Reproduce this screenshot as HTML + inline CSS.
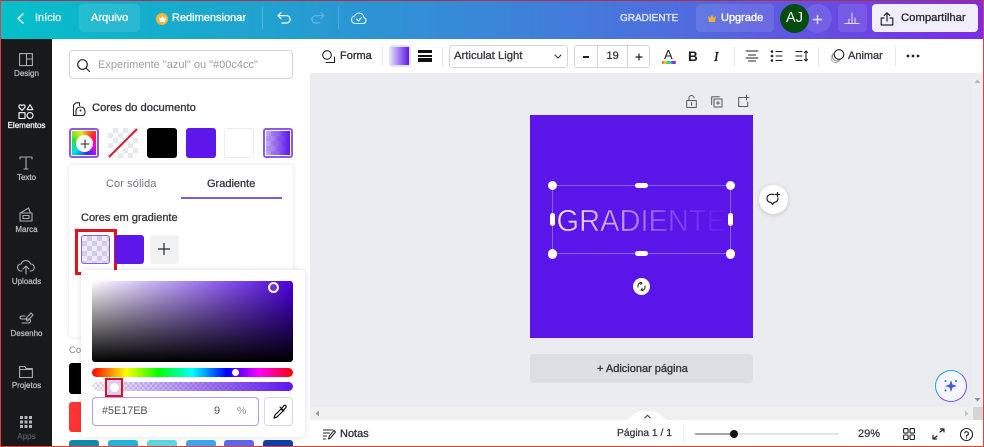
<!DOCTYPE html>
<html><head><meta charset="utf-8"><style>
*{box-sizing:border-box}
html,body{margin:0;padding:0}
body{width:984px;height:447px;position:relative;overflow:hidden;background:#ebecf0;font-family:"Liberation Sans",sans-serif;color:#26282c}
#r{position:absolute;left:0;top:0;width:984px;height:447px;overflow:hidden;filter:blur(.3px)}
.a{position:absolute}
.t{position:absolute;white-space:nowrap;line-height:1}
.m{-webkit-text-stroke:.35px currentColor}
svg{position:absolute;overflow:visible}
.w{color:#fff;font-size:11px;-webkit-text-stroke:.35px #fff}
.nav{position:absolute;left:1px;width:51px;text-align:center;color:#b5b7ba;font-size:8px;line-height:1;-webkit-text-stroke:.3px currentColor}
.sw{position:absolute;width:30px;height:30px;border-radius:3px}
.chk{background-color:#fff;background-image:conic-gradient(#e6e8ea 25%,transparent 0 50%,#e6e8ea 0 75%,transparent 0);background-size:10px 10px}
.ln{fill:none;stroke:currentColor;stroke-width:1.4;stroke-linecap:round;stroke-linejoin:round}
.h{position:absolute;background:#fff;border-radius:50%;width:9.500px;height:9.500px}
.p{position:absolute;background:#fff;border-radius:3px}
</style></head><body><div id="r">

<!-- top bar -->
<div class="a" style="left:0;top:0;width:984px;height:39px;background:linear-gradient(90deg,#03c0c9 0%,#1fa3cf 25%,#3a86d8 50%,#5368de 72%,#7d2ae8 100%)"></div>
<div class="a" style="left:79px;top:4px;width:61px;height:28px;background:rgba(255,255,255,.1);border-radius:4px"></div>
<svg style="left:17px;top:13px;color:#fff" width="7" height="11"><path class="ln" style="stroke-width:1.500" d="M6 1 1 5.500 6 10"/></svg>
<div class="t w" style="left:35px;top:13px;color:#e4f7f8;-webkit-text-stroke-color:#e4f7f8">Início</div>
<div class="t w" style="left:91px;top:13px">Arquivo</div>
<div class="a" style="left:156px;top:13px;width:12px;height:12px;border-radius:50%;background:#f4b73c"></div>
<svg style="left:158.500px;top:15.500px" width="7" height="6"><path d="M0 1l1.700 1.700L3.500 0l1.800 2.700L7 1 6 6H1z" fill="#fff"/></svg>
<div class="t w" style="left:172px;top:13px;font-size:11px">Redimensionar</div>
<div class="a" style="left:262px;top:7px;width:1px;height:22px;background:rgba(255,255,255,.18)"></div>
<svg style="left:277px;top:12px;color:#fff" width="14" height="12"><path class="ln" style="stroke-width:1.200" d="M4 .7 1 3.700l3 3M1.500 3.700H9.500a3.500 3.500 0 0 1 0 7.300H5"/></svg>
<svg style="left:311px;top:12px;color:#6cb0e4" width="14" height="12"><path class="ln" style="stroke-width:1.200" d="M10 .7l3 3-3 3M12.500 3.700H4.500a3.500 3.500 0 0 0 0 7.300H9"/></svg>
<div class="a" style="left:338px;top:7px;width:1px;height:22px;background:rgba(255,255,255,.18)"></div>
<svg style="left:351px;top:12px;color:#e8f2fb" width="16" height="12"><path class="ln" style="stroke-width:1.100" d="M4 11.500h8a3 3 0 0 0 1-5.800A5 5 0 0 0 3.500 4 3.800 3.800 0 0 0 4 11.500zM5.500 7l2 2 3-3.500"/></svg>

<div class="t w" style="left:620px;top:14px;color:#e3e6fb;-webkit-text-stroke-color:#e3e6fb;font-size:10px">GRADIENTE</div>
<div class="a" style="left:696px;top:4px;width:78px;height:28px;background:rgba(255,255,255,.1);border-radius:4px"></div>
<svg style="left:708px;top:15px" width="8" height="7"><path d="M0 1l2 1.700L4 0l2 2.700L8 1 7 7H1z" fill="#f3b13c"/></svg>
<div class="t w" style="left:721px;top:13px">Upgrade</div>
<div class="a" style="left:803px;top:4px;width:29px;height:29px;border-radius:50%;background:rgba(255,255,255,.1)"></div>
<div class="a" style="left:780px;top:4px;width:29px;height:29px;border-radius:50%;background:#044d0e;text-align:center;color:#fff;font-size:14.500px;line-height:29px">AJ</div>
<svg style="left:813px;top:15px;color:#e6e3fa" width="9" height="9"><path class="ln" d="M4.500 .5v8M.5 4.500h8"/></svg>
<div class="a" style="left:838px;top:4px;width:29px;height:28px;background:rgba(255,255,255,.1);border-radius:4px"></div>
<svg style="left:845px;top:12px;color:#e5e3fa" width="14" height="12"><path class="ln" style="stroke-width:1" d="M0 11.500h14M4 11V7M7 11V1M10 11V6"/></svg>
<div class="a" style="left:872px;top:4px;width:106px;height:28px;background:#f1eefb;border-radius:4px"></div>
<svg style="left:880px;top:11.500px;color:#26282c" width="14" height="14"><path class="ln" style="stroke-width:1.200" d="M7 9V1M4.200 3.500 7 .8l2.800 2.700M4 6H1.200v7h11.600V6H10"/></svg>
<div class="t m" style="left:901px;top:13px;font-size:11.300px;color:#2b2d33">Compartilhar</div>

<!-- sidebar -->
<div class="a" style="left:0;top:39px;width:52px;height:408px;background:#18191b"></div>
<svg style="left:19px;top:52.500px;color:#a9abae" width="14" height="13"><path class="ln" style="stroke-width:1.100" d="M.6.6h12.800v12H.6zM7.500.6v12M7.500 6H13.400"/></svg>
<div class="nav" style="top:70px">Design</div>
<svg style="left:18px;top:104px;color:#fff" width="16" height="15"><path class="ln" style="stroke-width:1.100" d="M4 6.300 1 3.300q-.5-2.500 1.500-2.500 1 0 1.500 1 .5-1 1.500-1 2 0 1.500 2.500zM12 .7 15 5.700H9zM1 8.700h6v5.800H1z"/><circle class="ln" style="stroke-width:1.100" cx="12" cy="11.500" r="3"/></svg>
<div class="nav" style="top:122px;color:#f3f3f4">Elementos</div>
<svg style="left:19px;top:156px;color:#a9abae" width="14" height="14"><path class="ln" style="stroke-width:1.100" d="M1 3V1h12v2M7 1v12M5 13h4"/></svg>
<div class="nav" style="top:174px">Texto</div>
<svg style="left:19px;top:207px;color:#a9abae" width="14" height="15"><path class="ln" style="stroke-width:1.100" d="M1 6h12v8H1zM1.500 6l8-5 2 5M4 8.500h6v3H4z"/></svg>
<div class="nav" style="top:226px">Marca</div>
<svg style="left:17px;top:259px;color:#a9abae" width="18" height="16"><path class="ln" style="stroke-width:1.100" d="M5 12H4a3.500 3.500 0 0 1 0-7 5 5 0 0 1 9.500 0 3.500 3.500 0 0 1 .5 7h-1M9 15V7M6 10l3-3 3 3"/></svg>
<div class="nav" style="top:278px">Uploads</div>
<svg style="left:19px;top:312px;color:#a9abae" width="15" height="14"><path class="ln" style="stroke-width:1.100" d="M6.500 7 12 1l2 2-5.500 6zM6 4H3Q1 4 1 5.500T3 7h6q2.500 0 2.500 2T9 11H3"/></svg>
<div class="nav" style="top:330px">Desenho</div>
<svg style="left:19px;top:365px;color:#a9abae" width="14" height="13"><path class="ln" style="stroke-width:1.100" d="M.6 1.500h5l1.500 2h6.300v9H.6zM.6 4.500h12.800"/></svg>
<div class="nav" style="top:382px">Projetos</div>
<svg style="left:20px;top:416px" width="12" height="12" fill="#b5b7ba"><rect width="3" height="3"/><rect x="4.500" width="3" height="3"/><rect x="9" width="3" height="3"/><rect y="4.500" width="3" height="3"/><rect x="4.500" y="4.500" width="3" height="3"/><rect x="9" y="4.500" width="3" height="3"/><rect y="9" width="3" height="3"/><rect x="4.500" y="9" width="3" height="3"/><rect x="9" y="9" width="3" height="3"/></svg>
<div class="nav" style="top:433px;color:#55575a">Apps</div>

<!-- panel -->
<div class="a" style="left:52px;top:39px;width:258px;height:408px;background:#fff"></div>
<div class="a" style="left:69px;top:50px;width:224px;height:29px;border:1px solid #d3d5d9;border-radius:4px"></div>
<svg style="left:77px;top:59px;color:#26282c" width="14" height="13"><circle class="ln" style="stroke-width:1.200" cx="5.500" cy="5.500" r="4.800"/><path class="ln" style="stroke-width:1.200" d="M9 9 12.500 12.500"/></svg>
<div class="t" style="left:98px;top:60px;font-size:11px;color:#9a9da3">Experimente "azul" ou "#00c4cc"</div>
<svg style="left:72px;top:102px;color:#26282c" width="14" height="14"><path class="ln" style="stroke-width:1.100" d="M1.500 13.500V3L4 .8h3.500V3.500M1.500 13.500h9q2.500 0 2.500-3.500 0-5-4.500-5Q4 5 4 9.500v4"/><circle cx="8.500" cy="8.500" r="1" fill="#26282c"/></svg>
<div class="t m" style="left:92px;top:103px;font-size:11.200px;color:#36383d">Cores do documento</div>

<div class="sw" style="left:69px;top:128px;border:2px solid #8b5be8;padding:1px;background:#fff"><div style="width:100%;height:100%;background:conic-gradient(from 45deg,#ff2a2a,#ff00d0,#2a32ff,#00e0e0,#27e827,#f4e81e,#ff2a2a)"></div></div>
<div class="a" style="left:76px;top:135px;width:17px;height:17px;border-radius:50%;background:#fff"></div>
<svg style="left:80.500px;top:139.500px;color:#222" width="8" height="8"><path class="ln" style="stroke-width:1" d="M4 0v8M0 4h8"/></svg>
<div class="sw chk" style="left:108px;top:128px"></div>
<svg style="left:108px;top:128px" width="30" height="30"><path d="M1 29 29 1" stroke="#c9203f" stroke-width="2"/></svg>
<div class="sw" style="left:147px;top:128px;background:#000"></div>
<div class="sw" style="left:186px;top:128px;background:#5e17eb"></div>
<div class="sw" style="left:224px;top:128px;background:#fff;border:1px solid #ecedef"></div>
<div class="sw" style="left:263px;top:128px;border:2px solid #8b5be8;padding:1px;background:#fff"><div style="width:100%;height:100%;background-color:#fff;background-image:linear-gradient(90deg,rgba(94,23,235,.35),#5e17eb),conic-gradient(#e6e8ea 25%,transparent 0 50%,#e6e8ea 0 75%,transparent 0);background-size:auto,10px 10px"></div></div>

<!-- tab card -->
<div class="a" style="left:69px;top:165px;width:224px;height:172px;background:#fff;border-radius:4px;box-shadow:0 0 5px rgba(40,40,60,.13)"></div>
<div class="t" style="left:106px;top:179px;font-size:11px;color:#74777c;letter-spacing:.1px">Cor sólida</div>
<div class="t m" style="left:207px;top:179px;font-size:11px;color:#3a3c41">Gradiente</div>
<div class="a" style="left:181px;top:197px;width:101px;height:2px;background:#7d5ae0"></div>
<div class="t m" style="left:81px;top:213px;font-size:11px;color:#3a3c41">Cores em gradiente</div>
<div class="a" style="left:75px;top:229px;width:42px;height:46px;border:3px solid #e0141e"></div>
<div class="sw" style="left:81px;top:235px;width:29px;height:29px;border:1.500px solid #8b5be8;background-color:#fff;background-image:linear-gradient(rgba(94,23,235,.09),rgba(94,23,235,.09)),conic-gradient(#dcdde7 25%,transparent 0 50%,#dcdde7 0 75%,transparent 0);background-size:auto,10px 10px"></div>
<div class="sw" style="left:115px;top:235px;width:29px;height:29px;background:#5e17eb"></div>
<div class="sw" style="left:150px;top:235px;width:29px;height:29px;background:#f1f2f4"></div>
<svg style="left:158px;top:243px;color:#26282c" width="12" height="12"><path class="ln" style="stroke-width:1.200" d="M6 .5v11M.5 6h11"/></svg>

<!-- bottom swatches behind popup -->
<div class="t" style="left:69px;top:346px;font-size:9.500px;color:#85888d">Co</div>
<div class="a" style="left:69px;top:363px;width:30px;height:31px;background:#000;border-radius:3px"></div>
<div class="a" style="left:69px;top:402px;width:30px;height:30px;background:#ff3434;border-radius:3px"></div>
<div class="a" style="left:69px;top:440px;width:30px;height:7px;background:#0f8aa8;border-radius:3px 3px 0 0"></div>
<div class="a" style="left:108px;top:440px;width:30px;height:7px;background:#1eb6d8;border-radius:3px 3px 0 0"></div>
<div class="a" style="left:147px;top:440px;width:30px;height:7px;background:#5cd6de;border-radius:3px 3px 0 0"></div>
<div class="a" style="left:186px;top:440px;width:30px;height:7px;background:#3ea6ee;border-radius:3px 3px 0 0"></div>
<div class="a" style="left:224px;top:440px;width:30px;height:7px;background:#5a6ae8;border-radius:3px 3px 0 0"></div>
<div class="a" style="left:263px;top:440px;width:30px;height:7px;background:#0f3fa6;border-radius:3px 3px 0 0"></div>

<!-- popup -->
<div class="a" style="left:81px;top:270px;width:224px;height:167px;background:#fff;border-radius:4px;box-shadow:0 0 6px rgba(40,40,60,.16)"></div>
<div class="a" style="left:92px;top:281px;width:201px;height:81px;border-radius:3px;background:linear-gradient(to bottom,transparent,#000),linear-gradient(to right,#fff,#4b00e0)"></div>
<div class="a" style="left:268px;top:282px;width:11px;height:11px;border-radius:50%;border:2px solid #fff;background:#6a35e8"></div>
<div class="a" style="left:92px;top:368px;width:201px;height:9px;border-radius:5px;background:linear-gradient(90deg,#f00 0%,#ff0 17%,#0f0 33%,#0ff 50%,#00f 67%,#f0f 83%,#f00 100%)"></div>
<div class="a" style="left:232px;top:369px;width:7px;height:7px;border-radius:50%;background:#fff"></div>
<div class="a" style="left:92px;top:382px;width:201px;height:9px;border-radius:5px;background-color:#fff;background-image:linear-gradient(90deg,rgba(94,23,235,0),#5e17eb),conic-gradient(#d8d9de 25%,transparent 0 50%,#d8d9de 0 75%,transparent 0);background-size:auto,5px 5px"></div>
<div class="a" style="left:105px;top:378px;width:18px;height:19px;background:#d9cdf6;border:2.500px solid #d8141f"></div>
<div class="a" style="left:109.500px;top:383px;width:9px;height:9px;border-radius:50%;background:#fff"></div>
<div class="a" style="left:92px;top:397px;width:167px;height:29px;border:1.500px solid #b79bee;border-radius:4px"></div>
<div class="t" style="left:102px;top:406px;font-size:10.800px;color:#54575c">#5E17EB</div>
<div class="t" style="left:214px;top:406px;font-size:11px;color:#54575c">9</div>
<div class="t" style="left:237px;top:406px;font-size:10.500px;color:#8d9095">%</div>
<div class="a" style="left:264px;top:397px;width:29px;height:29px;border:1px solid #d5d7db;border-radius:4px"></div>
<svg style="left:273px;top:404px;color:#111" width="14" height="15"><path class="ln" style="stroke-width:1.200" d="M1 14l1-3 6-6 2 2-6 6zM7 3l4 4M9 4l2-2.500q1-.7 1.800.2T13 3.500L10.500 6"/></svg>

<!-- toolbar -->
<div class="a" style="left:310px;top:39px;width:674px;height:34px;background:#fff"></div>
<svg style="left:322px;top:50px;color:#222" width="13" height="13"><circle class="ln" style="stroke-width:1.100" cx="5" cy="5" r="4.300"/><path class="ln" style="stroke-width:1.100" d="M4 12.500h8.500V7"/></svg>
<div class="t m" style="left:340px;top:51px;font-size:11px;color:#2e3035">Forma</div>
<div class="a" style="left:382px;top:46px;width:1px;height:19px;background:#e6e7ea"></div>
<div class="a" style="left:389px;top:45px;width:22px;height:22px;border-radius:3px;background:#e5e3f0"></div>
<div class="a" style="left:391px;top:47px;width:18px;height:18px;background:linear-gradient(90deg,#ded3fa,#5e17eb)"></div>
<div class="a" style="left:418px;top:50px;width:14px;height:3px;background:#111"></div>
<div class="a" style="left:418px;top:55px;width:14px;height:2px;background:#111"></div>
<div class="a" style="left:418px;top:58px;width:14px;height:4px;background:#111"></div>
<div class="a" style="left:442px;top:47px;width:1px;height:19px;background:#e6e7ea"></div>
<div class="a" style="left:449px;top:45px;width:119px;height:23px;border:1px solid #d3d5d9;border-radius:3px"></div>
<div class="t m" style="left:454px;top:51px;font-size:11.300px;color:#3c3e43">Articulat Light</div>
<svg style="left:554px;top:54px;color:#333" width="8" height="6"><path class="ln" style="stroke-width:1.100" d="M1 1l3 3 3-3"/></svg>
<div class="a" style="left:574px;top:45px;width:76px;height:23px;border:1px solid #d3d5d9;border-radius:3px"></div>
<div class="a" style="left:597px;top:45px;width:1px;height:23px;background:#d3d5d9"></div>
<div class="a" style="left:627px;top:45px;width:1px;height:23px;background:#d3d5d9"></div>
<div class="a" style="left:583px;top:56px;width:6px;height:1.500px;background:#222"></div>
<div class="t m" style="left:606.500px;top:51px;font-size:11px;color:#3c3e43">19</div>
<svg style="left:635px;top:52.500px;color:#222" width="8" height="8"><path class="ln" style="stroke-width:1.200" d="M4 1v6M1 4h6"/></svg>
<div class="t" style="left:664px;top:48px;font-size:13px;color:#222">A</div>
<div class="a" style="left:662px;top:61px;width:14px;height:3px;border-radius:1px;background:linear-gradient(90deg,#f33,#fc3,#3d3,#3cf,#53e,#c3e)"></div>
<div class="t" style="left:688px;top:50px;font-size:13.500px;font-weight:bold;color:#1a1a1a">B</div>
<div class="t m" style="left:714px;top:50px;font-size:13.500px;font-style:italic;font-family:'Liberation Serif',serif;color:#1a1a1a">I</div>
<div class="a" style="left:734px;top:47px;width:1px;height:19px;background:#e6e7ea"></div>
<svg style="left:745px;top:50px;color:#222" width="14" height="12"><path class="ln" style="stroke-width:1.100" d="M1 1h12M3.500 5h7M1 8h12M3.500 11h7"/></svg>
<svg style="left:770px;top:50px;color:#222" width="13" height="12"><path class="ln" style="stroke-width:1.100" d="M6 1.500h6M6 6h6M6 10.500h6"/><circle cx="2" cy="1.500" r="1.300" fill="#222"/><circle cx="2" cy="6" r="1.300" fill="#222"/><circle cx="2" cy="10.500" r="1.300" fill="#222"/></svg>
<svg style="left:795px;top:50px;color:#222" width="14" height="12"><path class="ln" style="stroke-width:1.100" d="M1 1.500h6M1 6h6M1 10.500h6M11 1v10M9.500 2.500 11 1l1.500 1.500M9.500 9.500 11 11l1.500-1.500"/></svg>
<div class="a" style="left:818px;top:47px;width:1px;height:19px;background:#e6e7ea"></div>
<svg style="left:830px;top:49px;color:#333" width="15" height="15"><circle cx="5.500" cy="9" r="4.500" fill="none" stroke="#aaa"/><circle cx="7" cy="7.500" r="4.500" fill="#fff" stroke="#888"/><circle cx="9" cy="5.500" r="4.800" fill="#fff" stroke="#222" stroke-width="1.100"/></svg>
<div class="t m" style="left:848px;top:51px;font-size:11px;color:#3c3e43">Animar</div>
<div class="a" style="left:895px;top:47px;width:1px;height:19px;background:#e6e7ea"></div>
<svg style="left:906px;top:54px" width="14" height="4" fill="#222"><circle cx="2" cy="2" r="1.400"/><circle cx="7" cy="2" r="1.400"/><circle cx="12" cy="2" r="1.400"/></svg>

<!-- page controls -->
<svg style="left:685.500px;top:94.500px;color:#55585c" width="11" height="13"><path class="ln" style="stroke-width:1" d="M.7 5.500h9.600v7H.7zM3 5.500V3a2.500 2.500 0 0 1 5 0M5.500 7.500v3"/></svg>
<svg style="left:711px;top:96px;color:#55585c" width="12" height="12"><path class="ln" style="stroke-width:1" d="M3 3h8v8H3zM.7 8.500V.7h7.500M7 5.500v3M5.500 7h3"/></svg>
<svg style="left:737.500px;top:95px;color:#55585c" width="11" height="12"><path class="ln" style="stroke-width:1" d="M5 2.500H.7V11.500H9.700V7M8.500 0v5M6 2.500h5"/></svg>

<!-- page -->
<div class="a" style="left:530px;top:115px;width:223px;height:223px;background:#5a15e8"></div>
<svg style="left:530px;top:160px" width="223" height="90"><defs><linearGradient id="g" gradientUnits="userSpaceOnUse" x1="26" y1="0" x2="196" y2="0"><stop offset="0" stop-color="#f4effe"/><stop offset=".35" stop-color="#c5a8f6"/><stop offset=".62" stop-color="#8e5cf2"/><stop offset=".88" stop-color="#6a2aec"/><stop offset="1" stop-color="#5e1bea"/></linearGradient></defs><text x="26.500" y="71" font-family="Liberation Sans" font-size="30.500" textLength="169.500" lengthAdjust="spacingAndGlyphs" fill="url(#g)" stroke="#5a15e8" stroke-width=".55">GRADIENTE</text></svg>
<div class="a" style="left:552px;top:184.500px;width:179px;height:69.500px;border:1px solid #8a60f0"></div>
<div class="h" style="left:547.500px;top:180.500px"></div>
<div class="h" style="left:725.500px;top:180.500px"></div>
<div class="h" style="left:547.500px;top:249px"></div>
<div class="h" style="left:725.500px;top:249px"></div>
<div class="p" style="left:635px;top:183px;width:13px;height:4.500px"></div>
<div class="p" style="left:635px;top:251px;width:13px;height:4.500px"></div>
<div class="p" style="left:550px;top:213px;width:4.500px;height:13px"></div>
<div class="p" style="left:728px;top:213px;width:4.500px;height:13px"></div>
<div class="a" style="left:633px;top:278px;width:17px;height:17px;border-radius:50%;background:#fff"></div>
<svg style="left:637px;top:282px;color:#222" width="9" height="9"><path class="ln" style="stroke-width:1" d="M1 5V3.500A2.500 2.500 0 0 1 3.500 1H5M3 .2 5 1 3.800 2.500M8 4v1.500A2.500 2.500 0 0 1 5.500 8H4M6 8.800 4 8l1.200-1.500"/></svg>
<div class="a" style="left:759px;top:185px;width:28.500px;height:28.500px;border-radius:50%;background:#fff;box-shadow:0 1px 4px rgba(0,0,0,.18)"></div>
<svg style="left:766px;top:192px;color:#222" width="15" height="15"><path class="ln" style="stroke-width:1.200" d="M8 2.500Q1 1.500 1 6.500 1 10 5 10.500L6.500 12.500 8 10.500Q12 10 12 6M11.500.5v4M9.500 2.500h4"/></svg>

<div class="a" style="left:530px;top:354px;width:223px;height:29px;background:#dddee3;border-radius:4px"></div>
<div class="t m" style="left:597px;top:364px;font-size:11px;color:#34363b">+ Adicionar página</div>

<!-- magic -->
<div class="a" style="left:935px;top:370px;width:32px;height:32px;border-radius:50%;background:#f5f6fb;border:1.500px solid;border-color:#27a5c8 #7d4ce0 #7d4ce0 #27a5c8"></div>
<svg style="left:943px;top:378px" width="16" height="16" fill="#3f5de0"><path d="M8 2l1.500 4.500L14 8 9.500 9.500 8 14 6.500 9.500 2 8l4.500-1.500z"/><circle cx="2.500" cy="3" r="1"/><circle cx="13" cy="3" r="1"/><circle cx="2.500" cy="12.500" r="1"/></svg>

<!-- scrollbars -->
<div class="a" style="left:972px;top:73px;width:12px;height:334px;background:#eceef1"></div>
<svg style="left:974px;top:79px" width="7" height="5"><path d="M.5 4 3.500.5 6.500 4z" fill="#b5b6b9"/></svg>
<svg style="left:974px;top:397px" width="7" height="5"><path d="M.5 1 3.500 4.500 6.500 1z" fill="#8b8c8f"/></svg>
<div class="a" style="left:310px;top:407px;width:674px;height:13px;background:#f0f0f1"></div>
<svg style="left:315px;top:410px" width="5" height="7"><path d="M4 .5.5 3.500 4 6.500z" fill="#9b9c9f"/></svg>
<svg style="left:964px;top:410px" width="5" height="7"><path d="M1 .5 4.500 3.500 1 6.500z" fill="#c2c3c5"/></svg>
<div class="a" style="left:973px;top:407px;width:10px;height:13px;background:#d4d5d7"></div>

<!-- bottom bar -->
<div class="a" style="left:310px;top:420px;width:674px;height:27px;background:#fff"></div>
<svg style="left:622px;top:410px" width="50" height="11"><path d="M0 11C9 11 11 1 20 1h10c9 0 11 10 20 10z" fill="#fff"/></svg>
<svg style="left:644px;top:414px;color:#444" width="7" height="5"><path class="ln" style="stroke-width:1.100" d="M.8 4 3.500 1.200 6.200 4"/></svg>
<svg style="left:323px;top:429px;color:#222" width="13" height="11"><path class="ln" style="stroke-width:1" d="M.5 1h9M.5 4h6M.5 7h3M.5 10h2M5.500 10l.8-3L11 1.500l1.500 1.500L7.500 9z"/></svg>
<div class="t m" style="left:340px;top:429px;font-size:11px;color:#34363b">Notas</div>
<div class="t m" style="left:617px;top:429px;font-size:10.300px;color:#34363b;-webkit-text-stroke-width:.25px">Página 1 / 1</div>
<div class="a" style="left:683px;top:423px;width:1px;height:20px;background:#eceded"></div>
<div class="a" style="left:695px;top:433px;width:144px;height:1.500px;background:#e3e4e6"></div>
<div class="a" style="left:695px;top:433px;width:38px;height:1.500px;background:#a5a6a9"></div>
<div class="a" style="left:730px;top:429.500px;width:8px;height:8px;border-radius:50%;background:#111"></div>
<div class="t m" style="left:858px;top:429px;font-size:11px;color:#34363b;-webkit-text-stroke-width:.25px">29%</div>
<svg style="left:903px;top:428px;color:#222" width="12" height="12"><rect class="ln" style="stroke-width:1.100" x=".6" y=".6" width="4.500" height="4.500" rx="1"/><rect class="ln" style="stroke-width:1.100" x="7" y=".6" width="4.500" height="4.500" rx="1"/><rect class="ln" style="stroke-width:1.100" x=".6" y="7" width="4.500" height="4.500" rx="1"/><rect class="ln" style="stroke-width:1.100" x="7" y="7" width="4.500" height="4.500" rx="1"/></svg>
<svg style="left:932px;top:428px;color:#222" width="13" height="12"><path class="ln" style="stroke-width:1.200" d="M8 4l4-3M8.500 1H12v3M1 11l4-3M1 7.500V11h3.500"/></svg>
<svg style="left:960px;top:428px;color:#222" width="14" height="14"><circle class="ln" style="stroke-width:1.100" cx="6.500" cy="6.500" r="6"/><path class="ln" style="stroke-width:1.100" d="M4.700 5A1.900 1.900 0 1 1 6.500 7.500v.8"/><circle cx="6.500" cy="10" r=".7" fill="#222"/></svg>

</div>
<!-- outer red border -->
<div class="a" style="left:0;top:0;width:984px;height:447px;border:1px solid #e0403f;border-top-color:#a8324f;pointer-events:none"></div>
</body></html>
